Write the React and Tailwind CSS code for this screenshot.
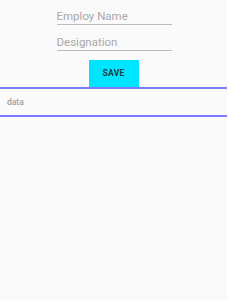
import React from 'react';

const Field = ({ placeholder }) => (
    <div className="w-[115px] border-b-[1.5px] border-[#bdbdbd] pb-[1px]">
        <span className="block text-[11.5px] leading-[14px] text-[#a8a8a8]">{placeholder}</span>
    </div>
);

const App = () => {
    return (
        <div className="w-[227px] h-[300px] bg-[#fafafa]" style={{ fontFamily: 'Roboto, "Noto Sans", sans-serif' }}>
            <div className="flex flex-col items-center pt-[9px]">
                <div className="flex flex-col gap-[10px] pl-[1px]">
                    <Field placeholder="Employ Name" />
                    <Field placeholder="Designation" />
                </div>
                <button className="mt-[9px] w-[50px] h-[27px] bg-[#00e5ff] text-[8.5px] font-bold text-[#1a3a40] tracking-wide">
                    SAVE
                </button>
            </div>
            <div className="border-y-2 border-[#7b7bff] h-[30px] flex items-center px-[7px]">
                <span className="text-[8.5px] font-medium text-[#9e9e9e]">data</span>
            </div>
        </div>
    );
};

export default App;
